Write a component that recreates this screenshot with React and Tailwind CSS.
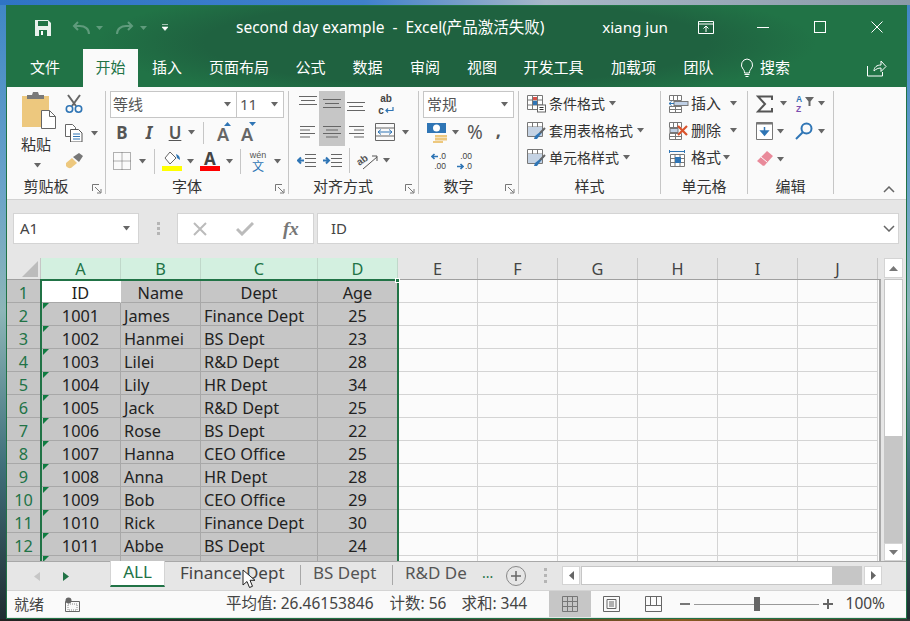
import React from 'react';

const rows = [
  ['1001', 'James', 'Finance Dept', '25'],
  ['1002', 'Hanmei', 'BS Dept', '23'],
  ['1003', 'Lilei', 'R&D Dept', '28'],
  ['1004', 'Lily', 'HR Dept', '34'],
  ['1005', 'Jack', 'R&D Dept', '25'],
  ['1006', 'Rose', 'BS Dept', '22'],
  ['1007', 'Hanna', 'CEO Office', '25'],
  ['1008', 'Anna', 'HR Dept', '28'],
  ['1009', 'Bob', 'CEO Office', '29'],
  ['1010', 'Rick', 'Finance Dept', '30'],
  ['1011', 'Abbe', 'BS Dept', '24'],
];

const tabs = [
  ['文件', 'w-[76px]'],
  ['开始', 'w-[55px] bg-[#fafafa] text-[#217346]'],
  ['插入', 'w-[58px]'],
  ['页面布局', 'w-[86px]'],
  ['公式', 'w-[57px]'],
  ['数据', 'w-[57px]'],
  ['审阅', 'w-[58px]'],
  ['视图', 'w-[56px]'],
  ['开发工具', 'w-[87px]'],
  ['加载项', 'w-[73px]'],
  ['团队', 'w-[57px]'],
];

const Chev = ({ className = '' }) => (
  <svg width="9" height="5" viewBox="0 0 9 5" className={'shrink-0 ' + className}>
    <path d="M1 0h7L4.500 4.500z" fill="#666" />
  </svg>
);

const Launcher = () => (
  <svg width="10" height="10" viewBox="0 0 10 10" className="absolute right-[3px] bottom-[0px]">
    <path d="M.5 7V.5H7M3 3l5.5 5.5M9 5v4H5" fill="none" stroke="#777" />
  </svg>
);

const Label = ({ children, className = '' }) => (
  <div className={'h-[20px] flex items-end justify-center text-[15px] leading-none text-[#333] ' + className}>{children}</div>
);

const Lines = ({ widths, y = 1, gap = 4, width = 18 }) => (
  <svg width={width} height={y + widths.length * gap} viewBox={`0 0 ${width} ${y + widths.length * gap}`}>
    {widths.map((w, i) => (
      <path key={i} d={`M${w[0]} ${y + i * gap + 0.5}H${w[1]}`} stroke="#666" fill="none" />
    ))}
  </svg>
);

const Paste = () => (
  <svg width="36" height="38" viewBox="0 0 36 38">
    <rect x="1" y="5" width="27" height="31" fill="#edc87e" />
    <path d="M6 8V4h5l1-3h5l1 3h5v4z" fill="#7a7a7a" />
    <path d="M20.500 19.500h8l6 6v12h-14z" fill="#fff" stroke="#666" />
    <path d="M28.500 19.500v6h6" fill="none" stroke="#666" />
  </svg>
);

const Scissors = () => (
  <svg width="18" height="20" viewBox="0 0 18 20">
    <path d="M3 1l8 11M15 1L7 12" stroke="#666" strokeWidth="2" fill="none" />
    <circle cx="4.500" cy="15" r="3.200" fill="none" stroke="#2f75b5" strokeWidth="1.600" />
    <circle cx="13.500" cy="15" r="3.200" fill="none" stroke="#2f75b5" strokeWidth="1.600" />
  </svg>
);

const Copy = () => (
  <svg width="18" height="18" viewBox="0 0 18 18">
    <path d="M.5.5h7l3 3v9H.5z" fill="#fff" stroke="#666" />
    <path d="M5.500 5.500h8l3.500 3.500v9H5.500z" fill="#fff" stroke="#555" />
    <path d="M8 10h7M8 12.500h7M8 15h7" stroke="#2f75b5" />
  </svg>
);

const Brush = () => (
  <svg width="19" height="17" viewBox="0 0 19 17">
    <path d="M1 11l6-5 5 5-6 5c-2 .5-4-.5-5-2z" fill="#edc87e" />
    <path d="M8 5l6-4 4 3-4 6z" fill="#777" />
  </svg>
);

const FontBtn = ({ children, className = '' }) => (
  <span className={'flex items-center justify-center ' + className}>{children}</span>
);

const GrowA = ({ up }) => (
  <span className="relative w-[16px] h-[22px] flex items-end justify-center text-[18px] leading-[20px] text-[#666] font-semibold">
    A
    <svg width="7" height="4" viewBox="0 0 7 4" className={'absolute top-0 ' + (up ? 'right-0' : 'right-[-1px]')}>
      <path d={up ? 'M0 4h7L3.500 0z' : 'M0 0h7L3.500 4z'} fill="#2f75b5" />
    </svg>
  </span>
);

const StyleIcon = ({ kind }) => (
  <svg width="19" height="18" viewBox="0 0 19 18">
    <path d="M.500.500h15v14H.500zM.500 5h15M.500 10h15M5.500.500v14M10.500.500v14" fill="#fff" stroke="#777" />
    {kind === 'cond' ? (
      <>
        <rect x="6" y="2" width="4" height="3" fill="#d9534a" />
        <rect x="6" y="6" width="4" height="4" fill="#2f75b5" />
        <rect x="10.500" y="10" width="8" height="7" fill="#fff" stroke="#666" />
        <path d="M12.500 12.500h4M12.500 14.500h4" stroke="#333" />
      </>
    ) : (
      <>
        <rect x="1" y="5" width="14" height="9" fill="#c5d3e4" />
        <path d="M18 7l-5 6-3 4H7l1-3 5-4z" fill="#2f75b5" />
        <path d="M18 6l-5 5" stroke="#666" strokeWidth="2" />
      </>
    )}
  </svg>
);

const CellIcon = ({ kind }) => (
  <svg width="20" height="18" viewBox="0 0 20 18">
    {kind === 'format' ? (
      <>
        <path d="M.500 1v3M15.500 1v3M1 2.500h14" stroke="#2f75b5" fill="none" />
        <path d="M1.500 5.500h14v12h-14zM1.500 9.500h14M1.500 13.500h14M6 5.500v12M11 5.500v12" fill="#fff" stroke="#777" />
        <rect x="6" y="8" width="6" height="6" fill="#2f75b5" />
      </>
    ) : (
      <>
        <path d="M.500.500h12v5H.500zM4.500.500v5M8.500.500v5M.500 11.500h12v6H.500zM.500 14.500h12M6.500 11.500v6" fill="#fff" stroke="#777" />
        {kind === 'insert' ? (
          <>
            <rect x="5" y="6.500" width="14" height="4" fill="#bfd0e6" stroke="#777" />
            <path d="M0 8.500h5M2.500 6.500L0 8.500l2.500 2" stroke="#2f75b5" fill="none" />
          </>
        ) : (
          <>
            <rect x="1" y="6.500" width="8" height="4" fill="#bfd0e6" stroke="#777" />
            <path d="M9 4l9 9M18 4l-9 9" stroke="#d9532c" strokeWidth="2.200" />
          </>
        )}
      </>
    )}
  </svg>
);

const StyleRow = ({ kind, text }) => (
  <div className="h-[27px] flex items-center gap-[3px]">
    <StyleIcon kind={kind} />
    <span className="text-[14px] leading-none text-[#333]">{text}</span>
    <Chev />
  </div>
);

const CellRow = ({ kind, text, spaced }) => (
  <div className="h-[27px] flex items-center">
    <CellIcon kind={kind} />
    <span className="ml-[2px] text-[15px] leading-none text-[#333]">{text}</span>
    <Chev className={spaced ? 'ml-[8px]' : 'ml-[1px]'} />
  </div>
);

const MiniArrow = ({ left }) => (
  <svg width="7" height="7" viewBox="0 0 7 7" className="mr-[1px]">
    <path d={left ? 'M7 3.500H1M3.500 1L1 3.500 3.500 6' : 'M0 3.500h6M3.500 1L6 3.500 3.500 6'} fill="none" stroke="#2f75b5" strokeWidth="1.600" />
  </svg>
);

const Ribbon = () => (
  <div className="h-[113px] bg-[#fafafa] flex pt-[4px] pb-[5px] border-b border-[#d2d2d2] relative">
    {/* clipboard */}
    <div className="w-[99px] border-r border-[#c6c6c6] flex flex-col relative">
      <div className="h-[84px] flex pl-[14px]">
        <div className="w-[44px] flex flex-col items-start">
          <Paste />
          <span className="text-[15px] leading-none mt-[8px] text-[#333]">粘贴</span>
          <Chev className="mt-[11px] ml-[12px]" />
        </div>
        <div className="flex flex-col gap-[10px] mt-[3px]">
          <Scissors />
          <div className="flex items-center gap-[7px]"><Copy /><Chev /></div>
          <Brush />
        </div>
      </div>
      <Label className="pr-[20px]">剪贴板</Label>
      <Launcher />
    </div>
    {/* font */}
    <div className="w-[183px] border-r border-[#c6c6c6] flex flex-col relative">
      <div className="h-[84px] flex flex-col">
        <div className="ml-[4px] w-[174px] h-[27px] flex border border-[#c6c6c6] bg-white text-[15px] text-[#555]">
          <div className="w-[126px] pl-[2px] flex items-center justify-between pr-[4px] border-r border-[#c6c6c6]">
            <span>等线</span><Chev />
          </div>
          <div className="flex-1 pl-[3px] pr-[4px] flex items-center justify-between">
            <span>11</span><Chev />
          </div>
        </div>
        <div className="h-[29px] flex items-center text-[#555] pl-[9px]">
          <FontBtn className="w-[14px] text-[17px] font-bold">B</FontBtn>
          <FontBtn className="w-[14px] ml-[13px] text-[17px] font-bold italic">I</FontBtn>
          <FontBtn className="w-[14px] ml-[12px] text-[17px] font-semibold underline">U</FontBtn>
          <Chev className="ml-[5px]" />
          <div className="ml-[7px] w-px h-[22px] bg-[#c6c6c6]" />
          <span className="ml-[11px]"><GrowA up /></span>
          <span className="ml-[8px]"><GrowA /></span>
        </div>
        <div className="h-[28px] flex items-center pl-[7px]">
          <svg width="18" height="18" viewBox="0 0 18 18">
            <path d="M.500.500h17v17H.500zM9 .500v17M.500 9h17" fill="none" stroke="#666" strokeDasharray="1 1" />
          </svg>
          <Chev className="ml-[7px]" />
          <div className="ml-[7px] w-px h-[25px] bg-[#c6c6c6]" />
          <svg width="20" height="20" viewBox="0 0 20 20" className="ml-[7px]">
            <path d="M8 1l6 6-6 6-5-6z" fill="#fff" stroke="#666" />
            <path d="M14 3c3 1 4 3 4 6l-3-2z" fill="#2f75b5" />
            <rect y="15" width="20" height="5" fill="#ffff00" />
          </svg>
          <Chev className="ml-[4px]" />
          <div className="ml-[5px] w-[20px] h-[20px] flex flex-col items-center">
            <span className="text-[17px] h-[15px] leading-[15px] font-bold text-[#444]">A</span>
            <span className="w-[20px] h-[5px] bg-[#ff0000]" />
          </div>
          <Chev className="ml-[5px]" />
          <div className="ml-[6px] w-px h-[25px] bg-[#c6c6c6]" />
          <div className="ml-[9px] w-[16px] flex flex-col items-center font-['Liberation_Sans','Noto_Sans_CJK_SC',sans-serif]">
            <span className="text-[9px] leading-[10px] text-[#555]">wén</span>
            <span className="mt-[1px] text-[12px] leading-[12px] text-[#2f75b5]">文</span>
          </div>
          <Chev className="ml-[7px]" />
        </div>
      </div>
      <Label className="pr-[20px]">字体</Label>
      <Launcher />
    </div>
    {/* align */}
    <div className="w-[129px] ml-[1px] border-r border-[#c6c6c6] flex flex-col relative">
      <div className="h-[84px] flex flex-col pl-[6px]">
        <div className="h-[27px] flex items-center">
          <div className="w-[23px] h-full flex justify-center pt-[4px]"><Lines widths={[[0, 18], [2, 16], [0, 18]]} /></div>
          <div className="w-[26px] h-full flex items-center justify-center bg-[#c6c6c6]"><Lines widths={[[0, 18], [2, 16], [0, 18]]} /></div>
          <div className="w-[22px] h-full flex justify-center items-end pb-[4px]"><Lines widths={[[0, 18], [2, 16], [0, 18]]} /></div>
          <div className="ml-[8px] w-[22px] flex flex-col items-center text-[10px] leading-[12px] font-bold text-[#444] font-['Liberation_Sans',sans-serif]">
            <span>ab</span>
            <span className="flex items-center">c
              <svg width="9" height="7" viewBox="0 0 9 7" className="ml-[1px]"><path d="M8 0v3.500H1M3 1.500L1 3.500l2 2" fill="none" stroke="#2f75b5" strokeWidth="1.200" /></svg>
            </span>
          </div>
        </div>
        <div className="h-[28px] flex items-center">
          <div className="w-[23px] flex justify-center"><Lines widths={[[0, 15], [0, 10], [0, 15], [0, 10]]} gap={3.5} width={16} /></div>
          <div className="w-[26px] h-full flex items-center justify-center bg-[#c6c6c6]"><Lines widths={[[0, 18], [3, 15], [0, 18], [3, 15]]} gap={3.5} /></div>
          <div className="w-[22px] flex justify-center"><Lines widths={[[1, 16], [6, 16], [1, 16], [6, 16]]} gap={3.5} width={16} /></div>
          <svg width="20" height="18" viewBox="0 0 20 18" className="ml-[8px]">
            <path d="M.500.500h19v17H.500zM.500 5h19M.500 13h19" fill="none" stroke="#666" />
            <path d="M3 9h14M6 6.500L3 9l3 2.500M14 6.500L17 9l-3 2.500" fill="none" stroke="#2f75b5" />
          </svg>
          <Chev className="ml-[6px]" />
        </div>
        <div className="h-[29px] flex items-center">
          <svg width="19" height="16" viewBox="0 0 19 16" className="ml-[1px]">
            <path d="M8 1.500h11M8 5.500h11M8 9.500h11M8 13.500h11" stroke="#666" />
            <path d="M7 7.500H1M4 4.500l-3 3 3 3" fill="none" stroke="#2f75b5" strokeWidth="2" />
          </svg>
          <svg width="19" height="16" viewBox="0 0 19 16" className="ml-[7px]">
            <path d="M8 1.500h11M8 5.500h11M8 9.500h11M8 13.500h11" stroke="#666" />
            <path d="M0 7.500h6M3 4.500l3 3-3 3" fill="none" stroke="#2f75b5" strokeWidth="2" />
          </svg>
          <div className="ml-[7px] w-px h-[25px] bg-[#c6c6c6]" />
          <svg width="22" height="20" viewBox="0 0 22 20" className="ml-[7px] overflow-visible">
            <text x="0" y="12" fontSize="10" fontFamily="Liberation Sans" fontWeight="700" fill="#555" transform="rotate(-35 6 10)">ab</text>
            <path d="M6 18L20 6M15 5h5v5" fill="none" stroke="#555" />
          </svg>
          <Chev className="ml-[3px]" />
        </div>
      </div>
      <Label className="pr-[22px]">对齐方式</Label>
      <Launcher />
    </div>
    {/* number */}
    <div className="w-[100px] border-r border-[#c6c6c6] flex flex-col relative">
      <div className="h-[84px] flex flex-col">
        <div className="ml-[4px] w-[91px] h-[27px] border border-[#c6c6c6] bg-white flex items-center justify-between pl-[3px] pr-[4px] text-[15px] text-[#555]">
          <span>常规</span><Chev />
        </div>
        <div className="h-[29px] flex items-center pl-[8px]">
          <svg width="21" height="20" viewBox="0 0 21 20">
            <rect width="19" height="10" fill="#2f75b5" />
            <ellipse cx="9.500" cy="5" rx="3.500" ry="3.500" fill="#fff" />
            <path d="M8 12h12v2.500H8zM8 15h12v2.500H8zM6 18h10v2H6z" fill="#edc87e" />
          </svg>
          <Chev className="ml-[3px]" />
          <span className="ml-[7px] text-[19px] leading-none text-[#555]">%</span>
          <span className="ml-[13px] text-[18px] leading-none font-bold text-[#555] -mt-[5px]">,</span>
        </div>
        <div className="h-[28px] flex items-center pl-[11px] font-['Liberation_Sans',sans-serif]">
          <div className="w-[16px] flex flex-col items-end text-[8.500px] leading-[10px] text-[#444]">
            <span className="flex items-center"><MiniArrow left />.0</span><span>.00</span>
          </div>
          <div className="ml-[9px] w-[17px] flex flex-col items-end text-[8.500px] leading-[10px] text-[#444]">
            <span>.00</span><span className="flex items-center"><MiniArrow />.0</span>
          </div>
        </div>
      </div>
      <Label className="pr-[20px]">数字</Label>
      <Launcher />
    </div>
    {/* styles */}
    <div className="w-[142px] border-r border-[#c6c6c6] flex flex-col">
      <div className="h-[84px] flex flex-col pl-[8px] -mt-[1px] mb-[1px]">
        <StyleRow kind="cond" text="条件格式" />
        <StyleRow kind="table" text="套用表格格式" />
        <StyleRow kind="cell" text="单元格样式" />
      </div>
      <Label>样式</Label>
    </div>
    {/* cells */}
    <div className="w-[87px] border-r border-[#c6c6c6] flex flex-col">
      <div className="h-[84px] flex flex-col pl-[8px] -mt-[1px] mb-[1px]">
        <CellRow kind="insert" text="插入" spaced />
        <CellRow kind="delete" text="删除" spaced />
        <CellRow kind="format" text="格式" />
      </div>
      <Label>单元格</Label>
    </div>
    {/* editing */}
    <div className="w-[86px] border-r border-[#c6c6c6] flex flex-col">
      <div className="h-[84px] flex flex-col pl-[8px] -mt-[1px] mb-[1px]">
        <div className="h-[27px] flex items-center">
          <svg width="18" height="18" viewBox="0 0 18 18">
            <path d="M16 5V1.500H2l7 7.500-7 7.500h14V13" fill="none" stroke="#555" strokeWidth="2" />
          </svg>
          <Chev className="ml-[5px]" />
          <div className="ml-[8px] relative w-[18px] h-[20px] text-[8.500px] leading-[10px] font-bold font-['Liberation_Sans',sans-serif]">
            <div className="text-[#2f75b5]">A</div>
            <div className="text-[#7b4fb0]">Z</div>
            <svg width="9" height="9" viewBox="0 0 9 9" className="absolute right-0 top-[3px]"><path d="M0 0h9L5.500 4.500V9h-2V4.500z" fill="#666" /></svg>
          </div>
          <Chev className="ml-[3px]" />
        </div>
        <div className="h-[28px] flex items-center">
          <svg width="18" height="18" viewBox="0 0 18 18">
            <path d="M.500.500h16v17H.500z" fill="#fff" stroke="#777" />
            <path d="M.500 1.500h16" stroke="#777" strokeWidth="2" />
            <path d="M8.500 5v7M5 9l3.500 4L12 9z" fill="#2f75b5" stroke="#2f75b5" strokeWidth="1.500" />
          </svg>
          <Chev className="ml-[2px]" />
          <svg width="18" height="18" viewBox="0 0 18 18" className="ml-[10px]">
            <circle cx="11.500" cy="6.500" r="5" fill="none" stroke="#2f75b5" strokeWidth="2" />
            <path d="M8 10l-7 7" stroke="#2f75b5" strokeWidth="2" />
          </svg>
          <Chev className="ml-[4px]" />
        </div>
        <div className="h-[28px] flex items-center">
          <svg width="18" height="16" viewBox="0 0 18 16">
            <path d="M11 0l6 5-8 9a2 2 0 01-3 0L1 10z" fill="#e98a9a" />
            <path d="M5 6l6 5" stroke="#fafafa" />
          </svg>
          <Chev className="ml-[2px]" />
        </div>
      </div>
      <Label>编辑</Label>
    </div>
    <svg width="12" height="7" viewBox="0 0 12 7" className="absolute right-[11px] bottom-[6px]">
      <path d="M1 6l5-5 5 5" fill="none" stroke="#666" strokeWidth="1.500" />
    </svg>
  </div>
);

const TitleBar = () => (
  <div className="bg-[radial-gradient(ellipse_360px_60px_at_50%_45%,#1f6240_70%,#217346_100%)] text-white">
    <div className="h-[43px] flex items-center relative">
      <svg width="16" height="16" viewBox="0 0 16 16" className="ml-[28px]">
        <path d="M0 0h13l3 3v13H0z" fill="#fff" fillOpacity=".9" />
        <rect x="3" y="1" width="10" height="5" fill="#217346" />
        <rect x="4" y="10" width="8" height="6" fill="#217346" />
        <rect x="6" y="11" width="2" height="4" fill="#fff" />
      </svg>
      <svg width="18" height="14" viewBox="0 0 18 14" className="ml-[21px]">
        <path d="M17 13c0-5-4-8-9-8H2M6 1L2 5l4 4" fill="none" stroke="#5f9b7c" strokeWidth="2" />
      </svg>
      <svg width="7" height="4" viewBox="0 0 7 4" className="ml-[6px]"><path d="M0 0h7L3.500 4z" fill="#5f9b7c" /></svg>
      <svg width="18" height="14" viewBox="0 0 18 14" className="ml-[13px]">
        <path d="M1 13c0-5 4-8 9-8h6M12 1l4 4-4 4" fill="none" stroke="#5f9b7c" strokeWidth="2" />
      </svg>
      <svg width="7" height="4" viewBox="0 0 7 4" className="ml-[6px]"><path d="M0 0h7L3.500 4z" fill="#5f9b7c" /></svg>
      <svg width="6" height="7" viewBox="0 0 6 7" className="ml-[15px]"><path d="M0 .500h6M0 3h6L3 6.500z" fill="#fff" stroke="#fff" strokeWidth=".6" /></svg>
      <span className="ml-[68px] text-[15.500px] whitespace-pre">second day example  -  Excel(产品激活失败)</span>
      <div className="ml-auto pr-[23px] flex items-center">
        <span className="text-[15.200px]">xiang jun</span>
        <svg width="16" height="13" viewBox="0 0 16 13" className="ml-[30px]">
          <path d="M.500.500h15v12H.500zM.500 3h15M8 11V5M5.500 7.500L8 5l2.500 2.500" fill="none" stroke="#fff" />
        </svg>
        <span className="ml-[43px] w-[12px] h-px bg-white" />
        <span className="ml-[45px] w-[12px] h-[12px] border border-white" />
        <svg width="12" height="12" viewBox="0 0 12 12" className="ml-[45px]"><path d="M.500.500l11 11M11.500.500l-11 11" stroke="#fff" /></svg>
      </div>
    </div>
    <div className="h-[38px] flex text-[15px] relative">
      {tabs.map(([t, cls]) => (
        <div key={t} className={'flex items-center justify-center pb-[2px] ' + cls}>{t}</div>
      ))}
      <svg width="16" height="20" viewBox="0 0 16 20" className="mt-[9px] ml-[12px]">
        <path d="M8 1a6 6 0 00-4 10c1 1 1.500 2 1.500 4h5c0-2 .5-3 1.500-4A6 6 0 008 1zM5.500 16.500h5M6.500 18.500h3" fill="none" stroke="#fff" />
      </svg>
      <span className="ml-[5px] pb-[2px] flex items-center">搜索</span>
      <svg width="20" height="18" viewBox="0 0 20 18" className="absolute right-[19px] top-[10px]">
        <path d="M.500 7v10h15v-4M7 12c0-4 3-6 7-6V2l5 5.500-5 5V9c-3 0-5 1-7 3z" fill="none" stroke="#fff" />
      </svg>
    </div>
  </div>
);

const FormulaBar = () => (
  <div className="h-[58px] bg-[#e6e6e6] flex pt-[13px] pl-[6px] gap-[3px]">
    <div className="w-[126px] h-[31px] bg-white border border-[#d4d4d4] flex items-center justify-between pl-[6px] pr-[7px] text-[15px] text-[#444]">
      <span>A1</span><Chev />
    </div>
    <div className="w-[32px] h-[31px] flex flex-col items-center justify-center gap-[2px]">
      <span className="w-[3px] h-[3px] bg-[#b5b5b5]" /><span className="w-[3px] h-[3px] bg-[#b5b5b5]" /><span className="w-[3px] h-[3px] bg-[#b5b5b5]" />
    </div>
    <div className="w-[137px] h-[31px] bg-white border border-[#d4d4d4] flex items-center">
      <svg width="14" height="14" viewBox="0 0 14 14" className="ml-[15px]"><path d="M1 1l12 12M13 1L1 13" stroke="#bbb" strokeWidth="2" /></svg>
      <svg width="18" height="14" viewBox="0 0 18 14" className="ml-[29px]"><path d="M1 7l5 5L17 1" fill="none" stroke="#bbb" strokeWidth="3" /></svg>
      <span className="ml-[29px] text-[19px] leading-none italic font-bold text-[#777] font-['Liberation_Serif',serif]">fx</span>
    </div>
    <div className="w-[582px] h-[31px] bg-white border border-[#d4d4d4] flex items-center justify-between pl-[13px] pr-[3px] text-[15px] text-[#444]">
      <span>ID</span>
      <svg width="12" height="7" viewBox="0 0 12 7"><path d="M1 1l5 5 5-5" fill="none" stroke="#666" strokeWidth="1.500" /></svg>
    </div>
  </div>
);

const Cell = ({ className = '', children }) => (
  <div className={'h-full shrink-0 border-r border-b border-[#a8a8a8] bg-[#c6c6c6] flex items-end leading-[18px] ' + className}>{children}</div>
);

const RowHead = ({ children }) => (
  <div className="w-[34px] h-full shrink-0 bg-[#c6c6c6] text-center leading-[26px] text-[#217346] border-r border-b border-[#a8a8a8]">{children}</div>
);

const Tri = () => (
  <svg width="6" height="6" viewBox="0 0 6 6" className="absolute left-[2px] top-0"><path d="M0 0h6L0 6z" fill="#107c41" /></svg>
);

const EmptyCols = () => (
  <>
    {[0, 1, 2, 3, 4, 5].map(i => <div key={i} className="w-[80px] h-full shrink-0 border-r border-b border-[#d4d4d4]" />)}
  </>
);

const Grid = () => (
  <div className="h-[303px] flex bg-[#e6e6e6]">
    <div className="w-[874px] flex flex-col relative overflow-hidden">
      <div className="h-[22px] flex text-[16.300px] leading-[22px] text-center shrink-0 border-b border-[#a0a0a0]">
        <div className="w-[34px] shrink-0 relative border-r border-[#c6c6c6]">
          <svg width="16" height="16" viewBox="0 0 16 16" className="absolute right-[2px] bottom-[2px]"><path d="M16 0v16H0z" fill="#bcbcbc" /></svg>
        </div>
        {[['A', 'w-[80px]'], ['B', 'w-[80px]'], ['C', 'w-[117px]'], ['D', 'w-[80px]']].map(([c, w]) => (
          <div key={c} className={'bg-[#d3f0e0] text-[#217346] border-r border-[#c0d8ca] ' + w}>{c}</div>
        ))}
        {['E', 'F', 'G', 'H', 'I', 'J'].map(c => (
          <div key={c} className="w-[80px] text-[#444] border-r border-[#c6c6c6]">{c}</div>
        ))}
      </div>
      <div className="flex-1 flex flex-col bg-[#fbfbfb] text-[16.300px] text-[#222] overflow-hidden border-r-2 border-[#a8a8a8]">
        <div className="h-[23px] shrink-0 flex">
          <RowHead>1</RowHead>
          <Cell className="w-[80px] bg-white justify-center border-r-white">ID</Cell>
          <Cell className="w-[80px] justify-center">Name</Cell>
          <Cell className="w-[117px] justify-center">Dept</Cell>
          <Cell className="w-[80px] justify-center">Age</Cell>
          <EmptyCols />
        </div>
        {rows.map((r, i) => (
          <div key={r[0]} className="h-[23px] shrink-0 flex">
            <RowHead>{i + 2}</RowHead>
            <Cell className="w-[80px] justify-center relative"><Tri />{r[0]}</Cell>
            <Cell className="w-[80px] pl-[3px]">{r[1]}</Cell>
            <Cell className="w-[117px] pl-[3px]">{r[2]}</Cell>
            <Cell className="w-[80px] justify-center">{r[3]}</Cell>
            <EmptyCols />
          </div>
        ))}
        <div className="h-[6px] shrink-0 flex">
          <RowHead />
          <Cell className="w-[80px] relative"><Tri /></Cell>
          <Cell className="w-[80px]" />
          <Cell className="w-[117px]" />
          <Cell className="w-[80px]" />
          <EmptyCols />
        </div>
      </div>
      {/* selection box */}
      <div className="absolute left-[33px] top-[21px] w-[359px] h-[290px] border-2 border-[#217346] pointer-events-none" />
      <div className="absolute left-[388px] top-[20px] w-[5px] h-[5px] bg-[#217346] border border-white" />
    </div>
    <div className="w-[25px] flex flex-col pl-[3px] pr-[3px]">
      <div className="h-[20px] bg-white border border-[#d4d4d4] flex items-center justify-center">
        <svg width="9" height="5" viewBox="0 0 9 5"><path d="M0 5h9L4.500 0z" fill="#777" /></svg>
      </div>
      <div className="h-[158px] bg-white border border-[#c6c6c6] mt-[1px]" />
      <div className="flex-1 bg-[#c6c6c6]" />
      <div className="h-[18px] bg-white border border-[#d4d4d4] flex items-center justify-center">
        <svg width="9" height="5" viewBox="0 0 9 5"><path d="M0 0h9L4.500 5z" fill="#777" /></svg>
      </div>
    </div>
  </div>
);

const SheetTabs = () => (
  <div className="h-[29px] bg-[#e6e6e6] flex items-stretch text-[17px] relative border-t border-[#a8a8a8]">
    <div className="w-[103px] flex items-center pl-[27px]">
      <svg width="6" height="9" viewBox="0 0 6 9"><path d="M6 0v9L0 4.500z" fill="#c6c6c6" /></svg>
      <svg width="6" height="9" viewBox="0 0 6 9" className="ml-[23px]"><path d="M0 0v9l6-4.500z" fill="#217346" /></svg>
    </div>
    <div className="w-[55px] h-[26px] pb-[2px] bg-white border-x border-[#d4d4d4] border-b-2 border-b-[#217346] text-[#217346] flex items-center justify-center -mt-[1px]">ALL</div>
    <div className="w-[135px] flex items-center pl-[15px] text-[#444] h-[21px]">Finance Dept</div>
    <div className="w-px h-[20px] mt-[3px] bg-[#a8a8a8]" />
    <div className="w-[91px] flex items-center pl-[12px] text-[#555] h-[21px]">BS Dept</div>
    <div className="w-px h-[20px] mt-[3px] bg-[#a8a8a8]" />
    <div className="w-[74px] flex items-center pl-[12px] text-[#555] h-[21px] whitespace-nowrap">R&amp;D De</div>
    <span className="w-[42px] pl-[15px] text-[#217346] leading-[22px] text-[14px]">...</span>
    <svg width="20" height="20" viewBox="0 0 20 20" className="mt-[4px] -ml-[3px]">
      <circle cx="10" cy="10" r="9.500" fill="none" stroke="#888" />
      <path d="M5 10h10M10 5v10" stroke="#666" strokeWidth="1.500" />
    </svg>
    <div className="ml-[11px] w-[16px] flex flex-col items-center justify-center gap-[3px] -mt-[2px]">
      <span className="w-[3px] h-[3px] bg-[#b5b5b5]" /><span className="w-[3px] h-[3px] bg-[#b5b5b5]" /><span className="w-[3px] h-[3px] bg-[#b5b5b5]" />
    </div>
    <div className="ml-[9px] w-[320px] h-[19px] mt-[4px] flex">
      <div className="w-[18px] bg-white border border-[#d4d4d4] flex items-center justify-center">
        <svg width="5" height="9" viewBox="0 0 5 9"><path d="M5 0v9L0 4.500z" fill="#666" /></svg>
      </div>
      <div className="w-[252px] bg-white border border-[#c6c6c6] ml-[1px]" />
      <div className="w-[29px] bg-[#c6c6c6]" />
      <div className="w-[18px] ml-[2px] bg-white border border-[#d4d4d4] flex items-center justify-center">
        <svg width="5" height="9" viewBox="0 0 5 9"><path d="M0 0v9l5-4.500z" fill="#666" /></svg>
      </div>
    </div>
    <svg width="14" height="22" viewBox="0 0 14 22" className="absolute left-[235px] top-[7px]">
      <path d="M1 1v15l4-3.500 2.500 6 3-1.200-2.500-6h5z" fill="#fff" stroke="#222" />
    </svg>
  </div>
);

const StatusBar = () => (
  <div className="h-[27px] bg-[#fafafa] flex items-center text-[15.500px] text-[#444] relative border-t border-[#d4d4d4]">
    <span className="ml-[7px] text-[15px]">就绪</span>
    <svg width="15" height="15" viewBox="0 0 15 15" className="ml-[21px]">
      <circle cx="3.500" cy="3.500" r="3" fill="#666" />
      <path d="M.500 4.500h14v10H.500z" fill="none" stroke="#666" />
      <path d="M3 7h9v6H3z" fill="none" stroke="#888" strokeDasharray="1 1" />
    </svg>
    <span className="ml-[146px]">平均值: 26.46153846</span>
    <span className="ml-[16px]">计数: 56</span>
    <span className="ml-[15px]">求和: 344</span>
    <div className="ml-auto w-[42px] h-full bg-[#c6c6c6] flex items-center justify-center">
      <svg width="16" height="16" viewBox="0 0 16 16"><path d="M.500.500h15v15H.500zM.500 5.500h15M.500 10.500h15M5.500.500v15M10.500.500v15" fill="none" stroke="#777" /></svg>
    </div>
    <svg width="17" height="16" viewBox="0 0 17 16" className="ml-[12px]"><path d="M.500.500h16v15H.500zM4 3.500h9v9H4zM6 6h5M6 8h5M6 10h5" fill="none" stroke="#666" /></svg>
    <svg width="17" height="16" viewBox="0 0 17 16" className="ml-[25px]"><path d="M.500.500h16v15H.500zM.500 9.500h16M5.500.500v9M11.500.500v9" fill="none" stroke="#666" /></svg>
    <span className="ml-[18px] w-[10px] h-[2px] bg-[#777]" />
    <div className="ml-[4px] w-[125px] h-px bg-[#999] relative">
      <span className="absolute left-[60px] -top-[7px] w-[6px] h-[14px] bg-[#666]" />
    </div>
    <svg width="10" height="10" viewBox="0 0 10 10" className="ml-[4px]"><path d="M0 5h10M5 0v10" stroke="#666" strokeWidth="2" /></svg>
    <span className="ml-[13px] mr-[21px]">100%</span>
  </div>
);

export default function App() {
  return (
    <div className="w-[910px] h-[621px] overflow-hidden flex flex-col font-['Noto_Sans','Noto_Sans_CJK_SC',sans-serif] bg-[linear-gradient(180deg,#3f86c6_0%,#6aa3c9_30%,#8db6b8_50%,#3f6f7a_75%,#1f2c30_100%)]">
      <div className="h-[5px] shrink-0 bg-[linear-gradient(90deg,#2f74c4_0%,#3f80cc_40%,#a8b8c8_60%,#8a9aa8_100%)]" />
      <div className="pl-[6px]">
        <div className="w-[901px] h-[614px] border border-[#217346] flex flex-col bg-[#e6e6e6]">
          <TitleBar />
          <Ribbon />
          <FormulaBar />
          <Grid />
          <SheetTabs />
          <StatusBar />
        </div>
      </div>
      <div className="flex-1 bg-[linear-gradient(90deg,#222_0%,#3a3a30_50%,#8a5a20_75%,#333_100%)]" />
    </div>
  );
}
